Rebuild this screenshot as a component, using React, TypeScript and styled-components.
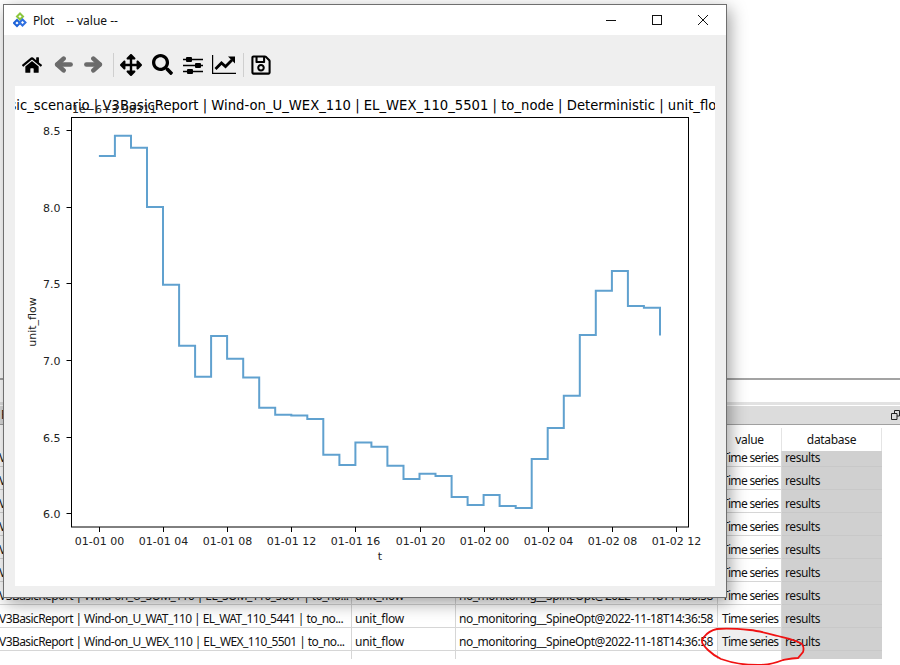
import styled, { createGlobalStyle } from 'styled-components';
import { FaArrowsAlt, FaHome, FaRegSave, FaSearch } from 'react-icons/fa';

const STEP_VALUES = [
	8.331, 8.463, 8.385, 7.998, 7.491, 7.093, 6.891, 7.157, 7.008, 6.885, 6.689, 6.643, 6.637, 6.615, 6.382, 6.315, 6.461, 6.434,
	6.31, 6.224, 6.258, 6.243, 6.106, 6.054, 6.119, 6.048, 6.035, 6.354, 6.556, 6.767, 7.163, 7.452, 7.581, 7.352, 7.341, 7.159,
];
const X_LABELS = ['01-01 00', '01-01 04', '01-01 08', '01-01 12', '01-01 16', '01-01 20', '01-02 00', '01-02 04', '01-02 08', '01-02 12'];
const Y_LABELS = ['8.5', '8.0', '7.5', '7.0', '6.5', '6.0'];

const AXES = { left: 56.5, top: 31.5, right: 673.5, bottom: 441 };
const xAt = (hour: number) => 83.9 + hour * 16.03;
const yAt = (value: number) => 427.3 - (value - 6) * 153.3;

function stepPath() {
	let d = `M${xAt(0)} ${yAt(STEP_VALUES[0])}`;
	STEP_VALUES.forEach((value, i) => {
		if (i === 0) return;
		d += ` H${xAt(i).toFixed(1)} V${yAt(value).toFixed(1)}`;
	});
	return d;
}

const ROWS = [
	{ name: 'Wind-on_U_ANE_110 | EL_ANE_110_5101', selected: false },
	{ name: 'Wind-on_U_BAR_110 | EL_BAR_110_5121', selected: false },
	{ name: 'Wind-on_U_CAL_110 | EL_CAL_110_5161', selected: false },
	{ name: 'Wind-on_U_DUR_110 | EL_DUR_110_5201', selected: false },
	{ name: 'Wind-on_U_ELM_110 | EL_ELM_110_5241', selected: false },
	{ name: 'Wind-on_U_HAR_110 | EL_HAR_110_5301', selected: false },
	{ name: 'Wind-on_U_SOM_110 | EL_SOM_110_5001', selected: false },
	{ name: 'Wind-on_U_WAT_110 | EL_WAT_110_5441', selected: false },
	{ name: 'Wind-on_U_WEX_110 | EL_WEX_110_5501', selected: true },
];

function SpineLogo() {
	return (
		<svg width='14' height='16' viewBox='0 0 14 16'>
			<g fill='none' strokeWidth='2'>
				<path d='M7 1.5 L10 4.5 L7 7.5 L4 4.5 Z' stroke='#8cc63f' />
				<path d='M4 8 L7 11 L4 14 L1 11 Z' stroke='#1c62d8' />
				<path d='M9.5 7.5 L12.5 10.5 L9.5 13.5 L6.5 10.5 Z' stroke='#2f6fe0' />
			</g>
		</svg>
	);
}

function ArrowIcon({ flip }: { flip?: boolean }) {
	return (
		<svg width='19' height='17' viewBox='0 0 19 17'>
			<g transform={flip ? 'translate(19 0) scale(-1 1)' : undefined} fill='none' stroke='currentColor' strokeWidth='4.6' strokeLinecap='round' strokeLinejoin='round'>
				<path d='M16.6 8.5 H3.4' />
				<path d='M9.6 2.6 L3.2 8.5 L9.6 14.4' />
			</g>
		</svg>
	);
}

function SlidersIcon() {
	return (
		<svg width='20' height='18' viewBox='0 0 20 18'>
			<path d='M0 3.5 H20 M0 9.5 H20 M0 15.5 H20' stroke='#000' strokeWidth='1.3' />
			<rect x='3' y='1' width='6' height='5' rx='1' />
			<rect x='12' y='7' width='6' height='5' rx='1' />
			<rect x='4' y='13' width='6' height='5' rx='1' />
		</svg>
	);
}

function ChartIcon() {
	return (
		<svg width='24' height='19' viewBox='0 0 24 19'>
			<path d='M.6 0 V18.4 H24' fill='none' stroke='#000' strokeWidth='1.2' />
			<path d='M3.5 14 L9.5 8 L13.5 11.5 L20 5' fill='none' stroke='#000' strokeWidth='2.8' />
			<path d='M16 1.5 H23 V8.5 Z' />
		</svg>
	);
}

export default function App() {
	return (
		<>
			<GlobalStyle />
			<Page>
				<TopPane />
				<Splitter />
				<DockTitle>
					<DockName>F</DockName>
					<svg width='9' height='10' viewBox='0 0 9 10'>
						<path d='M3.5 .5 H8.5 V6 H6 M.5 3.5 H6 V9.5 H.5 Z M3.5 .5 V3.5' fill='none' stroke='#222' />
					</svg>
				</DockTitle>
				<Table>
					<HeaderRow>
						<HeaderCell />
						<HeaderCell />
						<HeaderCell />
						<HeaderCell>value</HeaderCell>
						<HeaderCell>database</HeaderCell>
					</HeaderRow>
					<Body>
						{ROWS.map((row) => (
							<Row key={row.name}>
								<NameCell>V3BasicReport | {row.name} | to_no...</NameCell>
								<Cell>unit_flow</Cell>
								<RunCell>no_monitoring__SpineOpt@2022-11-18T14:36:58</RunCell>
								<ValueCell $selected={row.selected}>Time series</ValueCell>
								<DatabaseCell>results</DatabaseCell>
							</Row>
						))}
						<Row>
							<Cell />
							<Cell />
							<Cell />
							<Cell />
							<DatabaseCell />
						</Row>
					</Body>
				</Table>

				<PlotWindow>
					<TitleBar>
						<SpineLogo />
						<WindowTitle>Plot</WindowTitle>
						<WindowSubtitle>-- value --</WindowSubtitle>
						<WindowButtons>
							<svg width='12' height='12' viewBox='0 0 12 12'>
								<path d='M1 6.5 H11' stroke='#111' />
							</svg>
							<svg width='12' height='12' viewBox='0 0 12 12'>
								<rect x='1.5' y='1.5' width='9' height='9' fill='none' stroke='#111' />
							</svg>
							<svg width='12' height='12' viewBox='0 0 12 12'>
								<path d='M1 1 L11 11 M11 1 L1 11' stroke='#111' />
							</svg>
						</WindowButtons>
					</TitleBar>
					<Toolbar>
						<ToolIcon $width={20}>
							<FaHome size={20} />
						</ToolIcon>
						<ToolIcon $width={19} $left={12} $disabled>
							<ArrowIcon />
						</ToolIcon>
						<ToolIcon $width={19} $left={11} $disabled>
							<ArrowIcon flip />
						</ToolIcon>
						<ToolSeparator $left={10} />
						<ToolIcon $width={22} $left={6}>
							<FaArrowsAlt size={22} />
						</ToolIcon>
						<ToolIcon $width={22} $left={9}>
							<FaSearch size={21} />
						</ToolIcon>
						<ToolIcon $width={20} $left={10}>
							<SlidersIcon />
						</ToolIcon>
						<ToolIcon $width={24} $left={9}>
							<ChartIcon />
						</ToolIcon>
						<ToolSeparator $left={7} />
						<ToolIcon $width={20} $left={7}>
							<FaRegSave size={22} />
						</ToolIcon>
					</Toolbar>
					<Canvas>
						<svg width='700' height='500' viewBox='0 0 700 500'>
							<TitleText x='-22' y='24'>
								basic_scenario | V3BasicReport | Wind-on_U_WEX_110 | EL_WEX_110_5501 | to_node | Deterministic | unit_flow
							</TitleText>
							<AxisText x='57' y='27'>
								1e−6+3.98311
							</AxisText>
							<path d={stepPath()} fill='none' stroke='#60a1cf' strokeWidth='2' strokeLinejoin='miter' />
							<rect
								x={AXES.left}
								y={AXES.top}
								width={AXES.right - AXES.left}
								height={AXES.bottom - AXES.top}
								fill='none'
								stroke='#000'
							/>
							{Y_LABELS.map((label) => {
								const y = Math.round(yAt(Number(label))) + 0.5;
								return (
									<g key={label}>
										<path d={`M${AXES.left - 5} ${y} H${AXES.left}`} stroke='#000' />
										<AxisText x={AXES.left - 11} y={y + 4} textAnchor='end'>
											{label}
										</AxisText>
									</g>
								);
							})}
							{X_LABELS.map((label, i) => {
								const x = Math.round(xAt(i * 4)) + 0.5;
								return (
									<g key={label}>
										<path d={`M${x} ${AXES.bottom} v5`} stroke='#000' />
										<AxisText x={x} y={AXES.bottom + 18} textAnchor='middle'>
											{label}
										</AxisText>
									</g>
								);
							})}
							<AxisText x='365' y='474' textAnchor='middle'>
								t
							</AxisText>
							<AxisText x='21' y='236' textAnchor='middle' transform='rotate(-90 21 236)'>
								unit_flow
							</AxisText>
						</svg>
					</Canvas>
				</PlotWindow>

				<Scribble width='110' height='42' viewBox='0 0 110 42'>
					<path
						d='M4 12 C7 8 12 5 17 4 C28 3 40 4 50 5 C60 6 70 9 78 11 C86 13 97 15 102 19 C104 22 104 24 103 27 L98 33 C92 33 88 34 83 35 C76 38 68 40 58 40 C46 40 32 38 21 34 C15 31 11 28 8 25 C5 22 2 18 2 17 C2 15 3 13 4 12 Z'
						fill='none'
						stroke='#f01212'
						strokeWidth='1.8'
					/>
				</Scribble>
			</Page>
		</>
	);
}

const GlobalStyle = createGlobalStyle`
	html, body {
		margin: 0;
		padding: 0;
		background: #fff;
	}
`;

const Page = styled.div`
	position: relative;
	display: flex;
	flex-direction: column;
	width: 900px;
	height: 665px;
	overflow: hidden;
	background: #fff;
	font-family: 'Noto Sans', sans-serif;
	font-size: 12px;
	color: #111;
`;

const TopPane = styled.div`
	height: 378px;
	flex: none;
	border-bottom: 2px solid #a3a3a3;
`;

const Splitter = styled.div`
	height: 22px;
	flex: none;
	margin-bottom: 1px;
	border-bottom: 3px solid #e2e2e2;
`;

const DockTitle = styled.div`
	display: flex;
	align-items: center;
	justify-content: space-between;
	height: 18px;
	flex: none;
	padding: 0 0 0 1px;
	background: #dcdcdc;
	border-bottom: 1px solid #a0a0a0;
`;

const DockName = styled.span`
	font-size: 12px;
	line-height: 1;
`;

const Table = styled.div`
	display: flex;
	flex-direction: column;
	width: 882px;
	height: 231px;
	margin-top: 3px;
	overflow: hidden;
`;

const COLUMNS = '352px 104px 262px 64px 100px';

const HeaderRow = styled.div`
	display: grid;
	grid-template-columns: ${COLUMNS};
	height: 23px;
	flex: none;
`;

const HeaderCell = styled.div`
	display: flex;
	align-items: center;
	justify-content: center;
	background: #fff;
	border-right: 1px solid #e4e4e4;
	letter-spacing: -0.3px;
`;

const Body = styled.div`
	flex: 1;
	overflow: hidden;
`;

const Row = styled.div`
	display: grid;
	grid-template-columns: ${COLUMNS};
	grid-auto-rows: 23px;
	height: 23px;

	&:first-child {
		margin-top: -7px;
	}
`;

const Cell = styled.div`
	box-sizing: border-box;
	padding: 0 0 0 3px;
	border-right: 1px solid #d6d6d6;
	border-bottom: 1px solid #d6d6d6;
	line-height: 27px;
	white-space: nowrap;
	overflow: hidden;
	letter-spacing: -0.25px;
`;

const NameCell = styled(Cell)`
	padding-left: 0;
	text-indent: -1px;
	letter-spacing: -0.57px;
`;

const RunCell = styled(Cell)`
	letter-spacing: -0.47px;
`;

const ValueCell = styled(Cell)<{ $selected: boolean }>`
	letter-spacing: -0.7px;
	padding-left: 4px;
	background: ${({ $selected }) => ($selected ? '#efefef' : '#fff')};
`;

const DatabaseCell = styled(Cell)`
	letter-spacing: -0.4px;
	background: #d0d0d0;
	border-right: none;
	border-bottom-color: #c8c8c8;
`;

const PlotWindow = styled.div`
	position: absolute;
	left: 3px;
	top: 4px;
	display: flex;
	flex-direction: column;
	width: 724px;
	height: 594px;
	box-sizing: border-box;
	background: #efefef;
	border: 1px solid #6f6f6f;
	box-shadow: 3px 5px 16px rgba(0, 0, 0, 0.38);
`;

const TitleBar = styled.div`
	display: flex;
	align-items: center;
	height: 30px;
	flex: none;
	padding-left: 9px;
	background: #fff;
`;

const WindowTitle = styled.span`
	margin-left: 6px;
	letter-spacing: -0.2px;
`;

const WindowSubtitle = styled.span`
	margin-left: 12px;
`;

const WindowButtons = styled.div`
	display: flex;
	align-items: center;
	gap: 34px;
	margin-left: auto;
	padding-right: 17px;
`;

const Toolbar = styled.div`
	display: flex;
	align-items: center;
	height: 51px;
	flex: none;
	padding: 8px 0 0 18px;
	box-sizing: border-box;
`;

const ToolIcon = styled.div<{ $width: number; $left?: number; $disabled?: boolean }>`
	display: flex;
	align-items: center;
	justify-content: center;
	width: ${({ $width }) => $width}px;
	margin-left: ${({ $left }) => $left ?? 0}px;
	color: ${({ $disabled }) => ($disabled ? '#6b6b6b' : '#000')};
`;

const ToolSeparator = styled.div<{ $left: number }>`
	width: 1px;
	height: 24px;
	margin-left: ${({ $left }) => $left}px;
	background: #cfcfcf;
`;

const Canvas = styled.div`
	width: 700px;
	height: 500px;
	margin-left: 11px;
	background: #fff;
	overflow: hidden;

	svg {
		display: block;
	}
`;

const TitleText = styled.text`
	font-family: 'DejaVu Sans', sans-serif;
	font-size: 13.2px;
	fill: #000;
`;

const AxisText = styled.text`
	font-family: 'DejaVu Sans', sans-serif;
	font-size: 11px;
	fill: #222;
`;

const Scribble = styled.svg`
	position: absolute;
	left: 700px;
	top: 625px;
`;
